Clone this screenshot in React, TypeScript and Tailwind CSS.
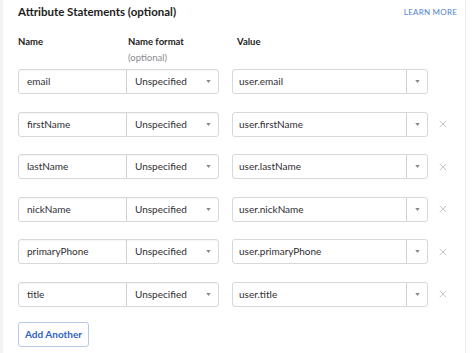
import { X } from 'lucide-react';

const rows = [
  { name: 'email', value: 'user.email', removable: false },
  { name: 'firstName', value: 'user.firstName', removable: true },
  { name: 'lastName', value: 'user.lastName', removable: true },
  { name: 'nickName', value: 'user.nickName', removable: true },
  { name: 'primaryPhone', value: 'user.primaryPhone', removable: true },
  { name: 'title', value: 'user.title', removable: true },
];

function Caret() {
  return (
    <svg width="5" height="3" viewBox="0 0 6 4" className="fill-[#8a8a8a]">
      <path d="M0 0h6L3 4z" />
    </svg>
  );
}

function AttributeRow({ name, value, removable }: { name: string; value: string; removable: boolean }) {
  return (
    <div className="flex items-center h-[25px]">
      <div className="flex h-full w-[201px] rounded-[3px] border border-[#d7d7dc] shadow-[inset_0_1px_1px_rgba(0,0,0,0.04)]">
        <div className="flex items-center w-[107px] pl-[8px] text-[10px] text-[#2e2e33]">{name}</div>
        <div className="flex flex-1 items-center justify-between border-l border-[#d0d0d5] pl-[8px] pr-[7px] text-[10px] text-[#2e2e33]">
          <span>Unspecified</span>
          <Caret />
        </div>
      </div>
      <div className="ml-[13px] flex h-full w-[196px] rounded-[3px] border border-[#d7d7dc]">
        <div className="flex flex-1 items-center pl-[6px] text-[10px] text-[#2e2e33]">{value}</div>
        <div className="flex w-[21px] items-center justify-center border-l border-[#d0d0d5]">
          <Caret />
        </div>
      </div>
      {removable && (
        <X className="ml-[9px] text-[#a8a8ad]" size={12} strokeWidth={1.3} />
      )}
    </div>
  );
}

export default function App() {
  return (
    <div className="h-[353px] w-[474px] bg-white flex" style={{ fontFamily: 'Lato, "Noto Sans", sans-serif' }}>
      <div className="w-[3px] bg-[#f3f3f5]" />
      <div className="w-[463px] border-r border-[#ececef] pl-[15px] pt-[4px]">
        <div className="flex h-[16px] items-center justify-between pr-[8px]">
          <h2 className="text-[11.5px] leading-[16px] font-bold text-[#1d1d21]">Attribute Statements (optional)</h2>
          <a className="text-[8px] leading-[16px] tracking-[0.03em] text-[#4d7fd1]">LEARN MORE</a>
        </div>
        <div className="mt-[15px] flex text-[9.5px] leading-[14px] font-bold text-[#1d1d21]">
          <div className="w-[110px]">Name</div>
          <div className="w-[109px]">
            <div>Name format</div>
            <div className="mt-[2px] font-normal text-[#8a8a90]">(optional)</div>
          </div>
          <div>Value</div>
        </div>
        <div className="mt-[4px] flex flex-col gap-[17.5px]">
          {rows.map((r) => (
            <AttributeRow key={r.name} {...r} />
          ))}
        </div>
        <button className="mt-[15px] h-[25px] w-[71px] rounded-[3px] border border-[#b8c8e8] text-[10px] font-bold text-[#2f63c4]">
          Add Another
        </button>
      </div>
    </div>
  );
}
